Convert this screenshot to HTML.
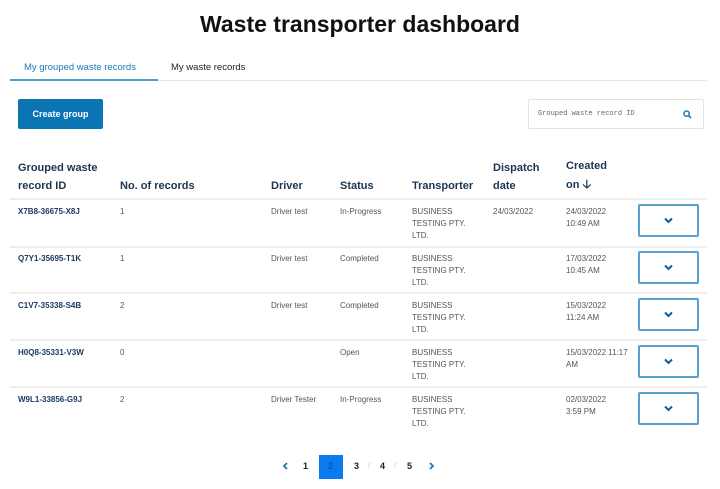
<!DOCTYPE html>
<html><head><meta charset="utf-8"><style>
*{margin:0;padding:0;box-sizing:border-box}
body{width:720px;height:489px;background:#fff;font-family:"Liberation Sans",sans-serif;position:relative;overflow:hidden;color:#333}
.a{position:absolute;white-space:nowrap}
h1{position:absolute;left:0;width:720px;text-align:center;top:11px;font-size:23px;font-weight:bold;color:#111}
.tab{font-size:9.5px;top:62px}
.hd{font-size:11px;font-weight:bold;color:#1c3550;line-height:18px}
.c{font-size:8px;color:#555;line-height:12px}
.id{font-size:8px;font-weight:bold;color:#1c3a60}
.line{position:absolute;left:10px;width:697px;height:2px;background:#eee}
.btn{position:absolute;left:638px;width:61px;height:33px;border:2px solid #5aa0cf;border-radius:2px}
.btn svg{position:absolute;left:24px;top:11px}
.pg{font-size:9px;font-weight:bold;color:#222;top:461px}
</style></head><body>
<h1>Waste transporter dashboard</h1>
<div class="a tab" style="left:24px;color:#1a7ab5">My grouped waste records</div>
<div class="a tab" style="left:171px;color:#222">My waste records</div>
<div style="position:absolute;left:10px;top:80px;width:697px;height:1px;background:#e6e6e6"></div>
<div style="position:absolute;left:10px;top:79px;width:148px;height:2px;background:#4a9fd0"></div>
<div style="position:absolute;left:18px;top:99px;width:85px;height:30px;background:#0b75b4;border-radius:2px;color:#fff;font-size:9px;font-weight:bold;text-align:center;line-height:30px">Create group</div>
<div style="position:absolute;left:528px;top:99px;width:176px;height:30px;border:1px solid #e2e2e2;border-radius:2px"></div>
<div class="a" style="left:538px;top:110px;font-family:'Liberation Mono',monospace;font-size:7px;color:#666">Grouped waste record ID</div>
<svg class="a" style="left:683px;top:110px" width="9" height="9" viewBox="0 0 9 9"><circle cx="3.6" cy="3.6" r="2.6" fill="none" stroke="#1a7ab5" stroke-width="1.5"/><path d="M5.5 5.5L8 8" stroke="#1a7ab5" stroke-width="1.6"/></svg>
<div class="a hd" style="left:18px;top:159px">Grouped waste<br>record ID</div>
<div class="a hd" style="left:120px;top:177px">No. of records</div>
<div class="a hd" style="left:271px;top:177px">Driver</div>
<div class="a hd" style="left:340px;top:177px">Status</div>
<div class="a hd" style="left:412px;top:177px">Transporter</div>
<div class="a hd" style="left:493px;top:159px">Dispatch<br>date</div>
<div class="a hd" style="left:566px;top:157px">Created<br>on <span style="font-size:12px">&#129123;</span></div>
<div class="line" style="top:198px"></div>

<div class="a id" style="left:18px;top:207px">X7B8-36675-X8J</div><div class="a c" style="left:120px;top:206px">1</div><div class="a c" style="left:271px;top:206px">Driver test</div><div class="a c" style="left:340px;top:206px">In-Progress</div><div class="a c" style="left:412px;top:206px">BUSINESS<br>TESTING PTY.<br>LTD.</div><div class="a c" style="left:493px;top:206px">24/03/2022</div><div class="a c" style="left:566px;top:206px">24/03/2022<br>10:49 AM</div>
<div class="btn" style="top:204px"><svg width="9" height="7" viewBox="0 0 9 7"><path d="M1 1.5L4.5 5 8 1.5" fill="none" stroke="#0b5fa0" stroke-width="2"/></svg></div>
<div class="line" style="top:246px"></div>

<div class="a id" style="left:18px;top:254px">Q7Y1-35695-T1K</div><div class="a c" style="left:120px;top:253px">1</div><div class="a c" style="left:271px;top:253px">Driver test</div><div class="a c" style="left:340px;top:253px">Completed</div><div class="a c" style="left:412px;top:253px">BUSINESS<br>TESTING PTY.<br>LTD.</div><div class="a c" style="left:566px;top:253px">17/03/2022<br>10:45 AM</div>
<div class="btn" style="top:251px"><svg width="9" height="7" viewBox="0 0 9 7"><path d="M1 1.5L4.5 5 8 1.5" fill="none" stroke="#0b5fa0" stroke-width="2"/></svg></div>
<div class="line" style="top:292px"></div>

<div class="a id" style="left:18px;top:301px">C1V7-35338-S4B</div><div class="a c" style="left:120px;top:300px">2</div><div class="a c" style="left:271px;top:300px">Driver test</div><div class="a c" style="left:340px;top:300px">Completed</div><div class="a c" style="left:412px;top:300px">BUSINESS<br>TESTING PTY.<br>LTD.</div><div class="a c" style="left:566px;top:300px">15/03/2022<br>11:24 AM</div>
<div class="btn" style="top:298px"><svg width="9" height="7" viewBox="0 0 9 7"><path d="M1 1.5L4.5 5 8 1.5" fill="none" stroke="#0b5fa0" stroke-width="2"/></svg></div>
<div class="line" style="top:339px"></div>

<div class="a id" style="left:18px;top:348px">H0Q8-35331-V3W</div><div class="a c" style="left:120px;top:347px">0</div><div class="a c" style="left:340px;top:347px">Open</div><div class="a c" style="left:412px;top:347px">BUSINESS<br>TESTING PTY.<br>LTD.</div><div class="a c" style="left:566px;top:347px">15/03/2022 11:17<br>AM</div>
<div class="btn" style="top:345px"><svg width="9" height="7" viewBox="0 0 9 7"><path d="M1 1.5L4.5 5 8 1.5" fill="none" stroke="#0b5fa0" stroke-width="2"/></svg></div>
<div class="line" style="top:386px"></div>

<div class="a id" style="left:18px;top:395px">W9L1-33856-G9J</div><div class="a c" style="left:120px;top:394px">2</div><div class="a c" style="left:271px;top:394px">Driver Tester</div><div class="a c" style="left:340px;top:394px">In-Progress</div><div class="a c" style="left:412px;top:394px">BUSINESS<br>TESTING PTY.<br>LTD.</div><div class="a c" style="left:566px;top:394px">02/03/2022<br>3:59 PM</div>
<div class="btn" style="top:392px"><svg width="9" height="7" viewBox="0 0 9 7"><path d="M1 1.5L4.5 5 8 1.5" fill="none" stroke="#0b5fa0" stroke-width="2"/></svg></div>

<svg class="a" style="left:282px;top:462px" width="6" height="8" viewBox="0 0 6 8"><path d="M5 1L2 4 5 7" fill="none" stroke="#1a7ab5" stroke-width="1.8"/></svg>
<div class="a pg" style="left:303px">1</div>
<div style="position:absolute;left:319px;top:455px;width:24px;height:24px;background:#0a7af0"></div>
<div class="a pg" style="left:328px;color:#0a55b0">2</div>
<div class="a pg" style="left:354px">3</div>
<div class="a pg" style="left:380px">4</div>
<div class="a pg" style="left:407px">5</div>
<div class="a" style="left:368px;top:461px;font-size:8px;color:#ccc">/</div>
<div class="a" style="left:394px;top:461px;font-size:8px;color:#ccc">/</div>
<svg class="a" style="left:429px;top:462px" width="6" height="8" viewBox="0 0 6 8"><path d="M1 1L4 4 1 7" fill="none" stroke="#1a7ab5" stroke-width="1.8"/></svg>
</body></html>
